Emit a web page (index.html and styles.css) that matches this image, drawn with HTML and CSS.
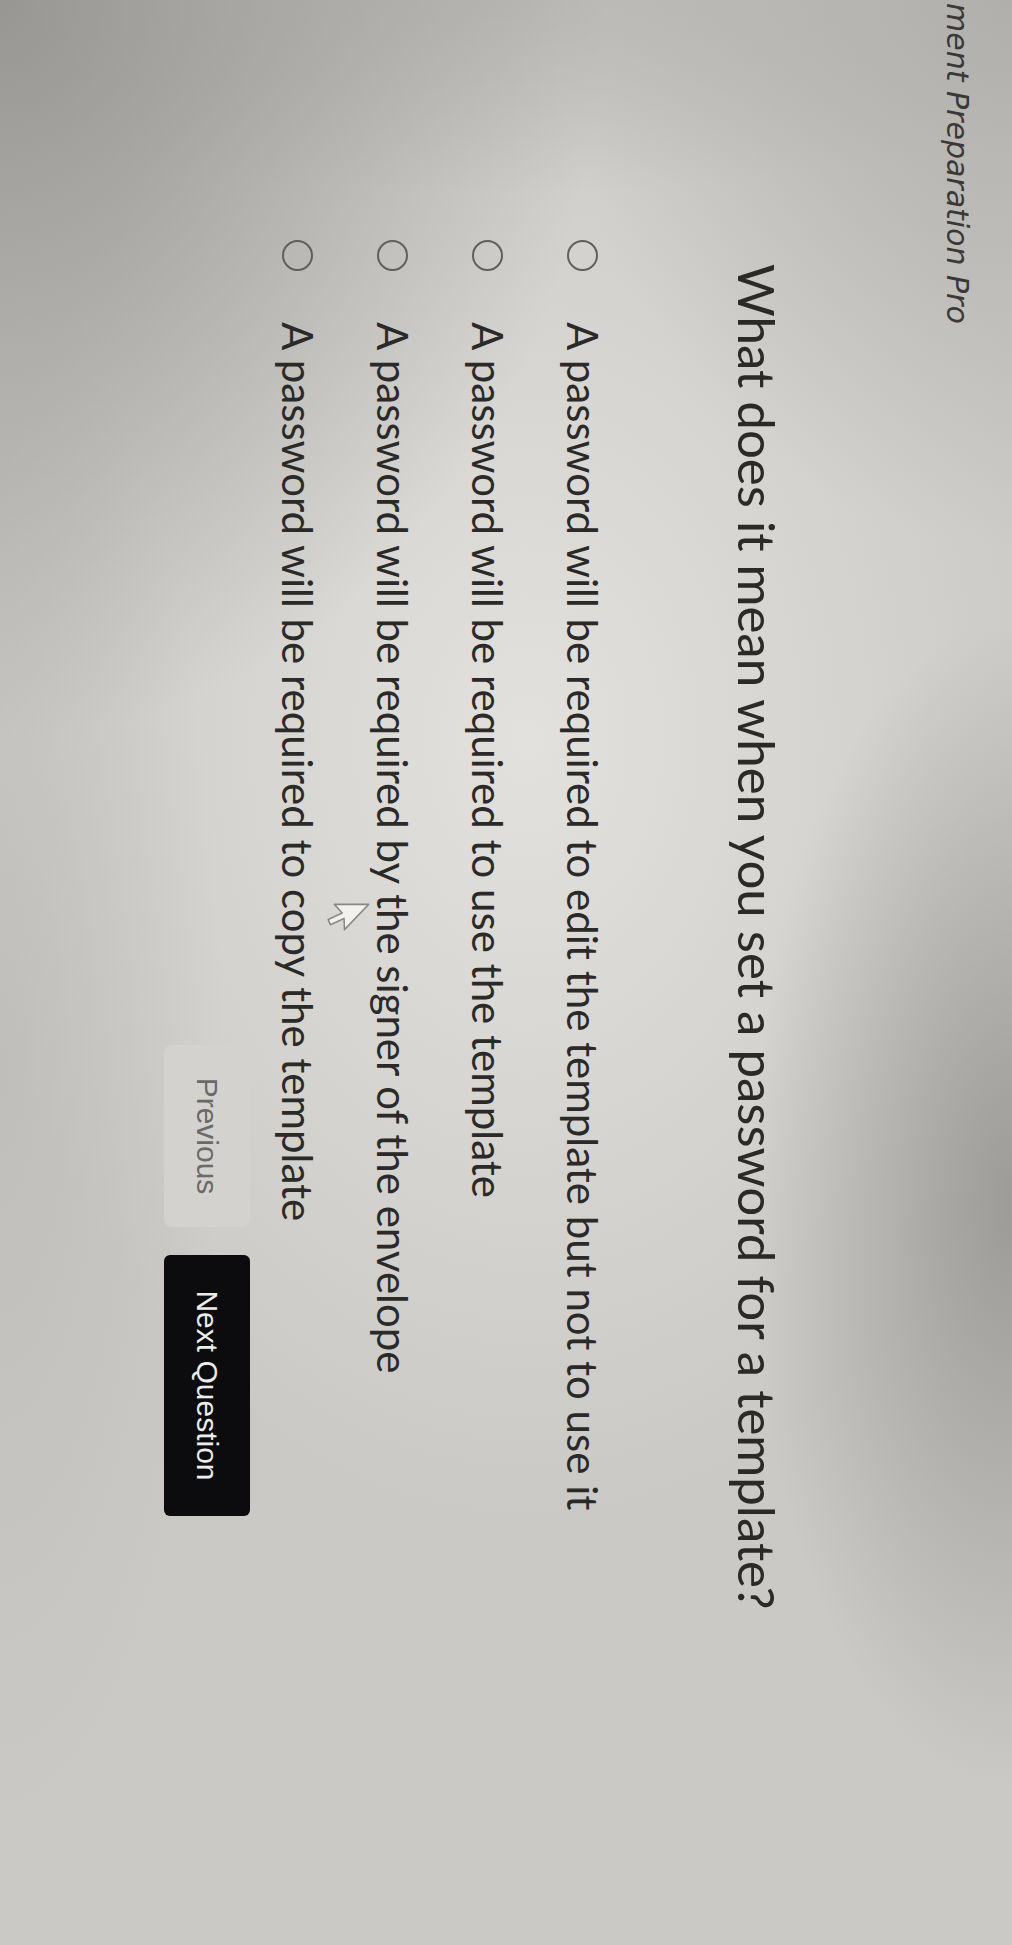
FILE: index.html
```html
<!DOCTYPE html>
<html lang="en">
<head>
<meta charset="utf-8">
<title>Assessment Preparation</title>
<link rel="stylesheet" href="styles.css">
</head>
<body>
<div class="frame">
  <div class="screen">
    <div class="header">ment Preparation Pro</div>
    <main class="main">
      <h1 class="question">What does it mean when you set a password for a template?</h1>
      <ul class="options">
        <li class="option"><span class="radio"></span><span class="label">A password will be required to edit the template but not to use it</span></li>
        <li class="option"><span class="radio"></span><span class="label">A password will be required to use the template</span></li>
        <li class="option"><span class="radio"></span><span class="label">A password will be required by the signer of the envelope</span></li>
        <li class="option"><span class="radio"></span><span class="label">A password will be required to copy the template</span></li>
      </ul>
      <div class="actions">
        <button class="btn btn-prev" type="button">Previous</button>
        <button class="btn btn-next" type="button">Next Question</button>
      </div>
    </main>
    <svg class="cursor" viewBox="0 0 12 20" preserveAspectRatio="none" aria-hidden="true">
      <path d="M0.6 0.6 L0.6 16.2 L4.3 12.6 L7.1 19 L9.3 18 L6.6 11.8 L11.4 11.6 Z" fill="#f2f1ee" stroke="#8a8986" stroke-width="0.7" stroke-linejoin="round"/>
    </svg>
  </div>
</div>
</body>
</html>
```
FILE: styles.css
```css
html, body {
  margin: 0;
  padding: 0;
  width: 1012px;
  height: 1945px;
  overflow: hidden;
}

body {
  background:
    radial-gradient(ellipse 60% 38% at 0% 0%, rgba(150,148,144,0.95), rgba(150,148,144,0) 100%),
    radial-gradient(ellipse 26% 30% at 100% 62%, rgba(152,150,146,0.9), rgba(152,150,146,0) 100%),
    radial-gradient(ellipse 45% 28% at 100% 0%, rgba(172,170,166,0.8), rgba(172,170,166,0) 100%),
    radial-gradient(ellipse 70% 10% at 50% 0%, rgba(176,174,170,0.6), rgba(176,174,170,0) 100%),
    radial-gradient(ellipse 22% 40% at 0% 55%, rgba(185,183,179,0.6), rgba(185,183,179,0) 100%),
    radial-gradient(ellipse 55% 40% at 52% 38%, #e3e1dd, rgba(227,225,221,0) 100%),
    #cbc9c5;
}

.frame {
  width: 1012px;
  height: 1945px;
  overflow: hidden;
}

.screen {
  position: relative;
  width: 1945px;
  height: 1012px;
  transform-origin: 0 0;
  transform: translate(1012px, 0) rotate(90deg);
  font-family: Lato, "Open Sans", sans-serif;
  color: #2b2a29;
}

.header {
  padding: 40px 0 0 3px;
  font-family: "DejaVu Sans", sans-serif;
  font-size: 30px;
  line-height: 1;
  font-style: italic;
  color: #3a3937;
  white-space: nowrap;
}

.main {
  padding-left: 240px;
}

.question {
  margin: 159px 0 0 24px;
  font-size: 51px;
  line-height: 1;
  font-weight: 400;
  white-space: nowrap;
}

.options {
  list-style: none;
  margin: 102px 0 0;
  padding: 0;
}

.option {
  display: flex;
  align-items: center;
  gap: 51px;
  height: 95px;
  font-size: 42px;
  line-height: 95px;
  white-space: nowrap;
}

.radio {
  flex: none;
  width: 31px;
  height: 31px;
  box-sizing: border-box;
  border: 2.5px solid #605f5d;
  border-radius: 50%;
}

.actions {
  display: flex;
  gap: 28px;
  margin: 0 0 0 805px;
}

.btn {
  height: 86px;
  padding: 0;
  border: none;
  font-family: "Liberation Sans", Arial, sans-serif;
  font-size: 30px;
  display: flex;
  align-items: center;
  justify-content: center;
}

.btn-prev {
  width: 182px;
  border-radius: 8px;
  background: #d4d2ce;
  color: #6b6a68;
}

.btn-next {
  width: 261px;
  border-radius: 6px;
  background: #0c0c0e;
  color: #ececec;
}

.cursor {
  position: absolute;
  left: 903px;
  top: 642px;
  width: 28px;
  height: 44px;
}
```
